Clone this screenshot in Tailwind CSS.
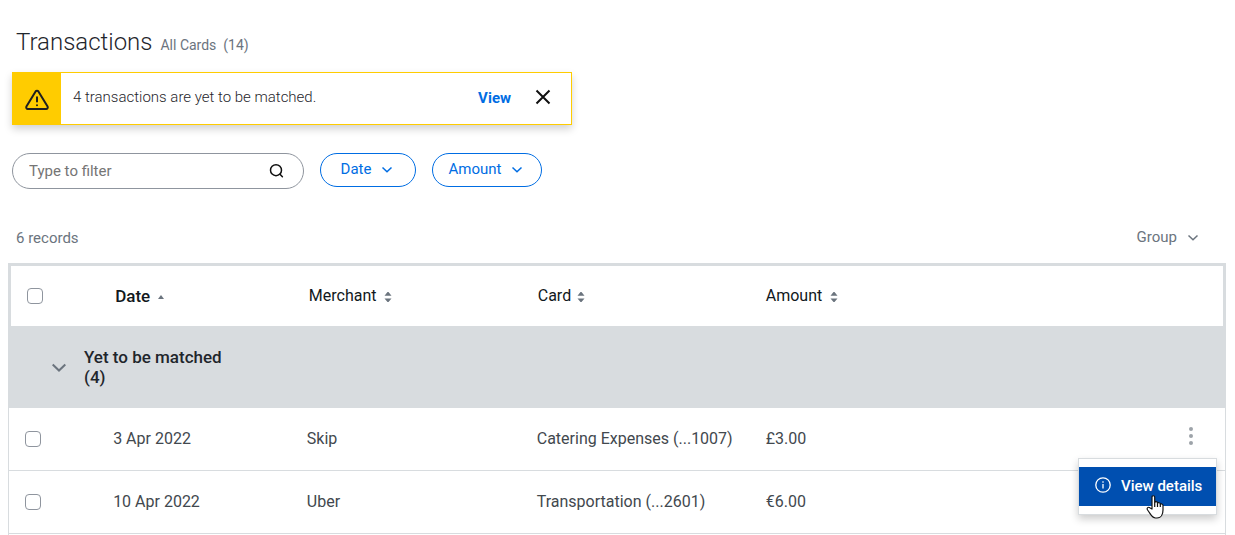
<!DOCTYPE html>
<html lang="en">
<head>
<meta charset="utf-8">
<meta name="viewport" content="width=device-width, initial-scale=1">
<title>Transactions</title>
<script src="https://cdn.jsdelivr.net/npm/@tailwindcss/browser@4"></script>
</head>
<body class="bg-white font-[Roboto,sans-serif] text-[#1f262c]">
<main class="pt-[26px] pr-[9px] pl-2">
  <header class="flex items-baseline gap-2 pl-2">
    <h1 class="text-2xl leading-8 font-light">Transactions</h1>
    <p class="text-sm leading-5 whitespace-pre text-[#6b747e]">All Cards  (14)</p>
  </header>

  <section role="status" class="mt-3.5 ml-1 flex h-[53px] w-full max-w-[560px] items-stretch border border-[#ffcc00] shadow-[0_4px_8px_rgba(0,0,0,0.18)]">
    <div class="flex w-12 items-center justify-center bg-[#ffcc00]">
      <svg class="mt-0.5 size-6" viewBox="0 0 24 24" fill="none" stroke="#1f1f1f" stroke-width="2" stroke-linecap="round" stroke-linejoin="round" aria-hidden="true"><path d="M10.6 3.4 1.4 18.6a1.7 1.7 0 0 0 1.4 2.4h18.4a1.7 1.7 0 0 0 1.4-2.4L13.4 3.4a1.7 1.7 0 0 0-2.8 0Z"/><path d="M12 9.2v4.2M12 17.2v.1"/></svg>
    </div>
    <p class="flex-1 pt-3.5 pl-3 text-[15px] leading-5 font-light">4 transactions are yet to be matched.</p>
    <a href="#unmatched" class="pt-[15px] text-[15px] leading-5 font-bold text-[#006de3]">View</a>
    <button type="button" aria-label="Dismiss" class="mr-5 ml-6 flex w-4 items-center justify-center pb-[3px]">
      <svg class="size-4" viewBox="0 0 16 16" fill="none" stroke="#111" stroke-width="2" aria-hidden="true"><path d="m1.5 1.5 13 13m0-13-13 13"/></svg>
    </button>
  </section>

  <form class="mt-7 ml-1 flex gap-4">
    <label class="flex h-9 w-[292px] items-center rounded-full border border-[#8f959e] pr-[18px] pl-4">
      <input type="text" aria-label="Type to filter" placeholder="Type to filter" class="min-w-0 flex-1 text-[15px] leading-5 outline-none placeholder:text-[#757575]">
      <svg class="size-4" viewBox="0 0 16 16" fill="none" stroke="#111" stroke-width="1.5" stroke-linecap="round" aria-hidden="true"><circle cx="7" cy="7.2" r="5.5"/><path d="m11 11.200 2.400 2.600"/></svg>
    </label>
    <button type="button" class="flex h-[34px] w-24 items-center justify-center gap-2.5 rounded-full border border-[#006de3] pr-0.5 pb-0.5 text-[15px] text-[#006de3]">Date
      <svg class="mt-0.5 h-2 w-3" viewBox="0 0 12 8" fill="none" stroke="currentColor" stroke-width="1.5" aria-hidden="true"><path d="m1.5 1.5 4.5 4.3 4.5-4.3"/></svg>
    </button>
    <button type="button" class="flex h-[34px] w-[110px] items-center justify-center gap-2.5 rounded-full border border-[#006de3] pr-0.5 pb-0.5 text-[15px] text-[#006de3]">Amount
      <svg class="mt-0.5 h-2 w-3" viewBox="0 0 12 8" fill="none" stroke="currentColor" stroke-width="1.5" aria-hidden="true"><path d="m1.5 1.5 4.5 4.3 4.5-4.3"/></svg>
    </button>
  </form>

  <div class="mt-[37px] flex items-center justify-between pr-[27px] pl-2 text-[15px] leading-5 text-[#6b747e]">
    <p class="pt-0.5">6 records</p>
    <button type="button" class="flex items-center gap-2.5">Group
      <svg class="mt-0.5 h-2 w-3" viewBox="0 0 12 8" fill="none" stroke="currentColor" stroke-width="1.5" aria-hidden="true"><path d="m1.5 1.5 4.5 4.3 4.5-4.3"/></svg>
    </button>
  </div>

  <table class="mt-[15px] w-full table-fixed border-separate border-spacing-0 text-left text-base">
    <colgroup><col class="w-[7.4%]"><col class="w-[15.9%]"><col class="w-[18.8%]"><col class="w-[18.8%]"><col class="w-[24%]"><col></colgroup>
    <thead>
      <tr class="h-[63px] text-[#111820]">
        <th class="border-t-3 border-l-3 border-[#d8dcdf] pl-4"><input type="checkbox" aria-label="Select all" class="block size-4 appearance-none rounded-[4px] border border-[#8f959e]"></th>
        <th class="border-t-3 border-[#d8dcdf] pl-[17px]" aria-sort="ascending"><button type="button" class="flex items-center gap-2 text-[17px] leading-6 font-medium">Date
          <svg class="mt-0.5 h-1 w-1.5" viewBox="0 0 6 4" fill="#6b747e" aria-hidden="true"><path d="m3 0 3 4H0z"/></svg></button></th>
        <th class="border-t-3 border-[#d8dcdf] pl-[17px]"><button type="button" class="flex items-center gap-2 font-normal">Merchant
          <svg class="mt-px h-3 w-2" viewBox="0 0 8 12" fill="#6b747e" aria-hidden="true"><path d="M3.500 1h1L7.500 4.800H.5zM.5 7.500h7l-3 3.500h-1z"/></svg></button></th>
        <th class="border-t-3 border-[#d8dcdf] pl-[17px]"><button type="button" class="flex items-center gap-1.5 font-normal">Card
          <svg class="mt-px h-3 w-2" viewBox="0 0 8 12" fill="#6b747e" aria-hidden="true"><path d="M3.500 1h1L7.500 4.800H.5zM.5 7.500h7l-3 3.500h-1z"/></svg></button></th>
        <th class="border-t-3 border-[#d8dcdf] pl-4"><button type="button" class="flex items-center gap-2 font-normal">Amount
          <svg class="mt-px h-3 w-2" viewBox="0 0 8 12" fill="#6b747e" aria-hidden="true"><path d="M3.500 1h1L7.500 4.800H.5zM.5 7.500h7l-3 3.500h-1z"/></svg></button></th>
        <td class="border-t-3 border-r-3 border-[#d8dcdf]"></td>
      </tr>
    </thead>
    <tbody id="unmatched">
      <tr class="h-[82px] bg-[#d8dcdf]">
        <th colspan="6" class="pl-11 font-medium">
          <button type="button" aria-expanded="true" class="flex items-center gap-[18px] text-left text-[17px] leading-5">
            <svg class="mt-0.5 h-2.5 w-3.5" viewBox="0 0 14 10" fill="none" stroke="#6b747e" stroke-width="2" aria-hidden="true"><path d="m.7 1.5 6.3 6 6.3-6"/></svg>
            <span>Yet to be matched<br>(4)</span>
          </button>
        </th>
      </tr>
      <tr class="h-[63px] text-[#42484e]">
        <td class="border-b border-l border-[#d8dcdf] pl-4"><input type="checkbox" aria-label="Select 3 Apr 2022, Skip" class="block size-4 appearance-none rounded-[4px] border border-[#8f959e]"></td>
        <td class="border-b border-[#d8dcdf] pl-[15px]">3 Apr 2022</td>
        <td class="border-b border-[#d8dcdf] pl-[15px]">Skip</td>
        <td class="border-b border-[#d8dcdf] pl-4 whitespace-nowrap">Catering Expenses (...1007)</td>
        <td class="border-b border-[#d8dcdf] pl-4">£3.00</td>
        <td class="relative border-r border-b border-[#d8dcdf] pr-7">
          <button type="button" aria-label="Row actions" aria-expanded="true" class="mb-1.5 ml-auto flex h-5 w-3 items-center justify-center">
            <svg class="h-5 w-1" viewBox="0 0 4 20" fill="#9da3a9" aria-hidden="true"><circle cx="2" cy="3" r="2"/><circle cx="2" cy="10" r="2"/><circle cx="2" cy="17" r="2"/></svg>
          </button>
          <div role="menu" class="absolute top-[50px] right-2 z-10 w-[139px] border border-[#d8dcdf] bg-white py-2 shadow-[0_4px_8px_rgba(0,0,0,0.2)]">
            <button type="button" role="menuitem" class="flex h-[39px] w-full items-center gap-2.5 bg-[#004fb0] pl-4 text-[15px] font-medium whitespace-nowrap text-white">
              <svg class="mb-1 size-4" viewBox="0 0 16 16" fill="none" stroke="currentColor" stroke-width="1.3" aria-hidden="true"><circle cx="8" cy="8" r="7.2"/><path d="M8 7v4.5M8 4.3v1.4"/></svg>
              View details
            </button>
            <svg class="pointer-events-none absolute top-9 left-[67px] h-6 w-[19px]" viewBox="0 0 19 24" fill="#fff" stroke="#111" stroke-width="1.2" stroke-linejoin="round" aria-hidden="true"><path d="M6 14V2C6 .3 8.700.3 8.700 2v5.500c.3-1.300 2.800-1.200 2.800.4v.5c.4-1.100 2.800-.9 2.800.6v.5c.5-1 2.700-.7 2.700.9V15c0 3.500-1.500 8-6 8H9.500C6 23 5 19.500 1.600 15 .3 12.900 2.400 11.600 3.800 12.700z"/><path fill="none" d="M8.700 7.500V12M11.500 8.400V12M14.300 9.500V12"/></svg>
          </div>
        </td>
      </tr>
      <tr class="h-[63px] text-[#42484e]">
        <td class="border-b border-l border-[#d8dcdf] pl-4"><input type="checkbox" aria-label="Select 10 Apr 2022, Uber" class="block size-4 appearance-none rounded-[4px] border border-[#8f959e]"></td>
        <td class="border-b border-[#d8dcdf] pl-[15px]">10 Apr 2022</td>
        <td class="border-b border-[#d8dcdf] pl-[15px]">Uber</td>
        <td class="border-b border-[#d8dcdf] pl-4 whitespace-nowrap">Transportation (...2601)</td>
        <td class="border-b border-[#d8dcdf] pl-4">€6.00</td>
        <td class="border-r border-b border-[#d8dcdf]"></td>
      </tr>
    </tbody>
  </table>
  <div class="h-px border-x border-[#d8dcdf]"></div>
</main>
</body>
</html>
